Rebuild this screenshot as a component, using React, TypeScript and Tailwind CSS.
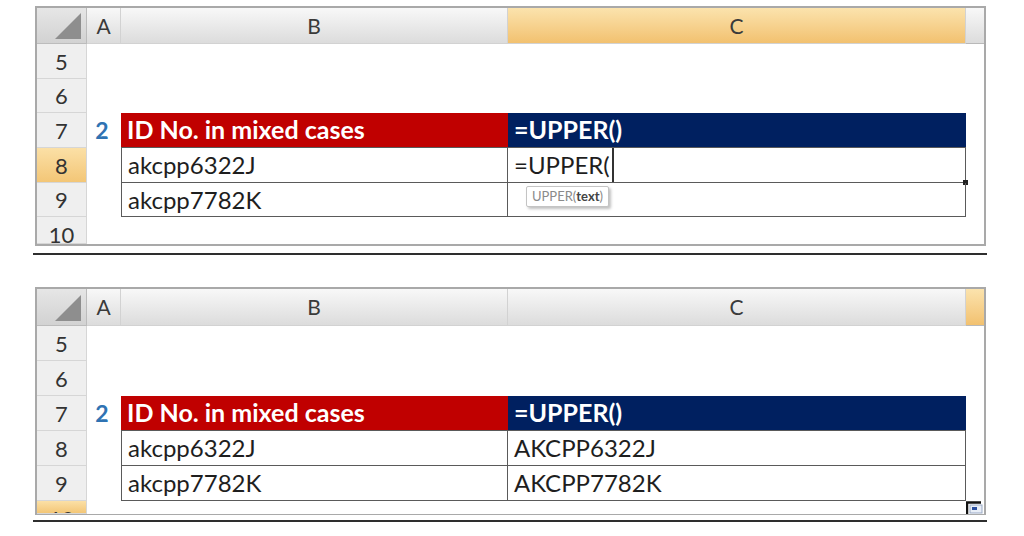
import React from 'react'

// Two stacked Excel-style snapshots of the UPPER() function example.

const FONT = "font-['Lato',sans-serif]"

type Variant = 'edit' | 'done'

function ColHead({ label, active, last }: { label?: string; active?: boolean; last?: boolean }) {
  return (
    <div
      className={`flex items-center justify-center text-[21px] text-[#3a3a3a] border-b border-[#b9b9b9] ${
        last ? '' : 'border-r border-[#d2d2d2]'
      } ${
        active
          ? 'bg-linear-to-b from-[#fbe3ad] to-[#f2c16f]'
          : 'bg-linear-to-b from-[#f8f8f8] to-[#dcdcdc]'
      }`}
    >
      {label}
    </div>
  )
}

function RowHead({ n, active, clip }: { n: string; active?: boolean; clip?: boolean }) {
  return (
    <div
      className={`flex justify-center overflow-hidden text-[22px] text-[#333] border-r border-[#bdbdbd] border-b border-[#d6d6d6] ${
        clip ? 'items-start pt-[1px]' : 'items-center'
      } ${active ? 'bg-linear-to-b from-[#fbe0a6] to-[#f3c676]' : 'bg-[#efefef]'}`}
    >
      {n}
    </div>
  )
}

function Blank() {
  return <div className="bg-white" />
}

function Sheet({ variant }: { variant: Variant }) {
  const top = variant === 'edit'
  const rows = top
    ? 'grid-rows-[36px_35px_34px_35px_35px_34px_27px]'
    : 'grid-rows-[37px_35px_35px_35px_35px_35px_13px]'
  const dataCell = 'flex items-center px-[6px] text-[24px] text-[#1e1e1e] border-b border-[#5a5a5a]'

  return (
    <div className={`${FONT} ml-[35px] w-[951px] border-t-2 border-x-2 border-[#a9a9a9] ${top ? 'border-b-2' : 'border-b'} overflow-hidden`}>
      <div className={`grid grid-cols-[50px_34px_387px_458px_18px] ${rows}`}>
        {/* header row */}
        <div className="relative bg-linear-to-b from-[#e6e6e6] to-[#d2d2d2] border-r border-b border-[#bcbcbc]">
          <svg className="absolute right-[5px] bottom-[4px]" width="26" height="26" viewBox="0 0 26 26">
            <polygon points="26,0 26,26 0,26" fill="#8e8e8e" />
          </svg>
        </div>
        <ColHead label="A" />
        <ColHead label="B" />
        <ColHead label="C" active={top} />
        <ColHead active={!top} last />

        {/* row 5 */}
        <RowHead n="5" />
        <Blank />
        <Blank />
        <Blank />
        <Blank />

        {/* row 6 */}
        <RowHead n="6" />
        <Blank />
        <Blank />
        <Blank />
        <Blank />

        {/* row 7: table header */}
        <RowHead n="7" />
        <div className="flex items-center justify-center pr-[4px] text-[23px] font-bold text-[#2f73b3]">2</div>
        <div className="flex items-center px-[6px] text-[25px] font-bold text-white bg-[#c00000] border-b border-[#5a5a5a]">
          ID No. in mixed cases
        </div>
        <div className="flex items-center px-[6px] text-[25px] font-bold text-white bg-[#002060] border-b border-[#5a5a5a]">
          =UPPER()
        </div>
        <Blank />

        {/* row 8 */}
        <RowHead n="8" active={top} />
        <Blank />
        <div className={`${dataCell} border-l border-r`}>akcpp6322J</div>
        {top ? (
          <div className="flex items-stretch border-b border-r border-[#5a5a5a] relative">
            <div className="flex items-center pl-[6px] pr-[2px] text-[24px] text-[#1e1e1e] border-r-2 border-[#333]">
              =UPPER(
            </div>
            <div className="absolute -right-[3px] -bottom-[3px] w-[5px] h-[5px] bg-[#222]" />
          </div>
        ) : (
          <div className={`${dataCell} border-r`}>AKCPP6322J</div>
        )}
        <Blank />

        {/* row 9 */}
        <RowHead n="9" />
        <Blank />
        <div className={`${dataCell} border-l border-r`}>akcpp7782K</div>
        {top ? (
          <div className="relative border-b border-r border-[#5a5a5a]">
            <div className="absolute left-[18px] top-[3px] flex items-center h-[21px] px-[5px] bg-white border border-[#c4c4c4] rounded-[2px] shadow-[2px_2px_3px_rgba(0,0,0,0.25)] text-[13px] leading-none">
              <span className="text-[#8a8a8a]">UPPER(</span>
              <span className="font-bold text-[#444]">text</span>
              <span className="text-[#8a8a8a]">)</span>
            </div>
          </div>
        ) : (
          <div className={`${dataCell} border-r`}>AKCPP7782K</div>
        )}
        <Blank />

        {/* row 10 */}
        <RowHead n="10" active={!top} clip />
        <Blank />
        <Blank />
        <Blank />
        <div className="relative">
          {!top && (
            <svg className="absolute left-0 top-0" width="18" height="13" viewBox="0 0 18 13">
              <path d="M1 13 V1.5 H15" fill="none" stroke="#111" strokeWidth="2.5" />
              <rect x="4" y="4" width="12" height="8" fill="#e8eef7" stroke="#9aa9c4" strokeWidth="1" />
              <rect x="6" y="6" width="5" height="3" fill="#2a4fa0" />
            </svg>
          )}
        </div>
      </div>
    </div>
  )
}

export default function App() {
  return (
    <div className="w-[1024px] h-[536px] bg-white overflow-hidden">
      <div className="pt-[6px]">
        <Sheet variant="edit" />
      </div>
      <div className="ml-[33px] mt-[7px] w-[954px] h-[2px] bg-[#2e2e2e]" />
      <div className="pt-[32px]">
        <Sheet variant="done" />
      </div>
      <div className="ml-[33px] mt-[5px] w-[954px] h-[2px] bg-[#2e2e2e]" />
    </div>
  )
}
